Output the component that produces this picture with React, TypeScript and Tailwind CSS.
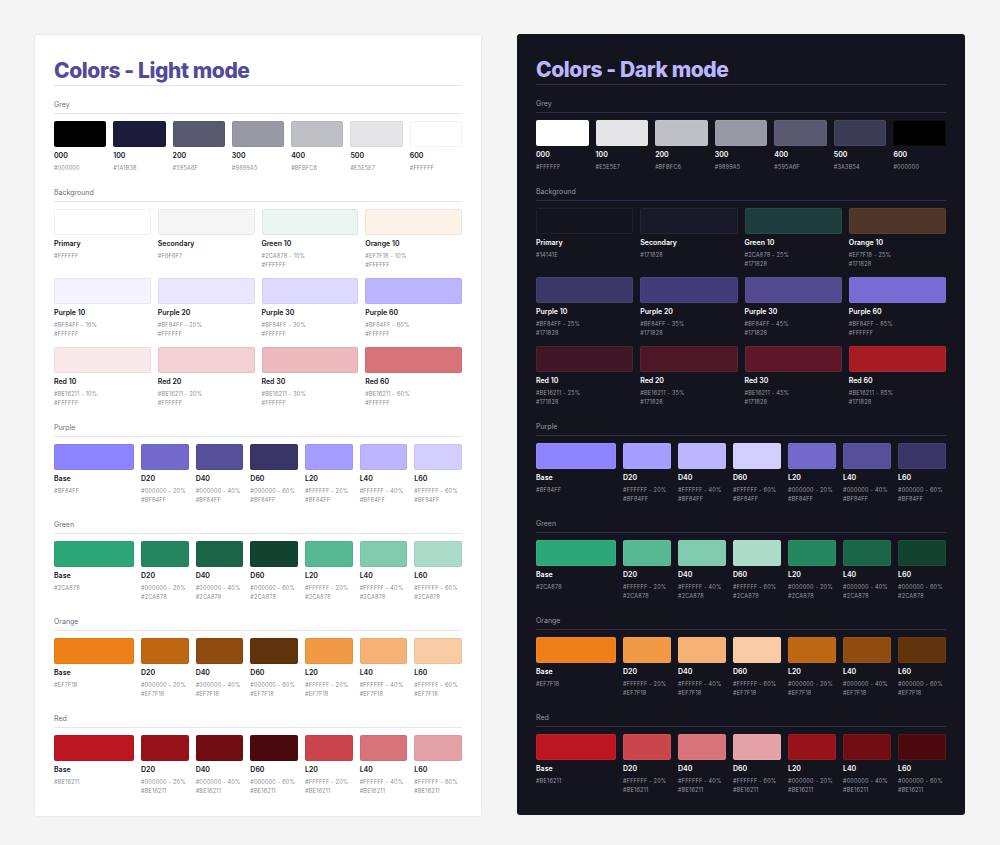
import React from "react";

type Sw = { n: string; c: string; h: string[] };
type Theme = "light" | "dark";

const greyL: Sw[] = [
  ["000", "#000000"], ["100", "#1A1B38"], ["200", "#595A6F"], ["300", "#9899A5"], ["400", "#BFBFC6"], ["500", "#E5E5E7"], ["600", "#FFFFFF"],
].map(([n, c]) => ({ n, c, h: [c] }));
const greyD: Sw[] = [
  ["000", "#FFFFFF"], ["100", "#E5E5E7"], ["200", "#BFBFC6"], ["300", "#9899A5"], ["400", "#595A6F"], ["500", "#3A3B54"], ["600", "#000000"],
].map(([n, c]) => ({ n, c, h: [c] }));

const bgL: Sw[][] = [
  [
    { n: "Primary", c: "#FFFFFF", h: ["#FFFFFF"] },
    { n: "Secondary", c: "#F6F6F7", h: ["#F6F6F7"] },
    { n: "Green 10", c: "#EAF6F1", h: ["#2CA878 - 10%", "#FFFFFF"] },
    { n: "Orange 10", c: "#FDF2E8", h: ["#EF7F18 - 10%", "#FFFFFF"] },
  ],
  [
    { n: "Purple 10", c: "#F4F3FF", h: ["#BF84FF - 10%", "#FFFFFF"] },
    { n: "Purple 20", c: "#E9E6FF", h: ["#BF84FF - 20%", "#FFFFFF"] },
    { n: "Purple 30", c: "#DEDAFF", h: ["#BF84FF - 30%", "#FFFFFF"] },
    { n: "Purple 60", c: "#BCB5FF", h: ["#BF84FF - 60%", "#FFFFFF"] },
  ],
  [
    { n: "Red 10", c: "#F9E8E9", h: ["#BE16211 - 10%", "#FFFFFF"] },
    { n: "Red 20", c: "#F2D0D3", h: ["#BE16211 - 20%", "#FFFFFF"] },
    { n: "Red 30", c: "#ECB9BC", h: ["#BE16211 - 30%", "#FFFFFF"] },
    { n: "Red 60", c: "#D8737A", h: ["#BE16211 - 60%", "#FFFFFF"] },
  ],
];
const bgD: Sw[][] = [
  [
    { n: "Primary", c: "#14141E", h: ["#14141E"] },
    { n: "Secondary", c: "#171828", h: ["#171828"] },
    { n: "Green 10", c: "#1E3D3E", h: ["#2CA878 - 25%", "#171828"] },
    { n: "Orange 10", c: "#4F3428", h: ["#EF7F18 - 25%", "#171828"] },
  ],
  [
    { n: "Purple 10", c: "#3A3869", h: ["#BF84FF - 25%", "#171828"] },
    { n: "Purple 20", c: "#403C7A", h: ["#BF84FF - 35%", "#171828"] },
    { n: "Purple 30", c: "#52498F", h: ["#BF84FF - 45%", "#171828"] },
    { n: "Purple 60", c: "#776BD6", h: ["#BF84FF - 85%", "#FFFFFF"] },
  ],
  [
    { n: "Red 10", c: "#3F1727", h: ["#BE16211 - 25%", "#171828"] },
    { n: "Red 20", c: "#4D1728", h: ["#BE16211 - 35%", "#171828"] },
    { n: "Red 30", c: "#5E1729", h: ["#BE16211 - 45%", "#171828"] },
    { n: "Red 60", c: "#A81A24", h: ["#BE16211 - 85%", "#171828"] },
  ],
];

const families: { name: string; hex: string; base: string; d: string[]; l: string[] }[] = [
  { name: "Purple", hex: "#BF84FF", base: "#8F84FF", d: ["#7369CC", "#564F99", "#393566"], l: ["#A59DFF", "#BCB5FF", "#D2CEFF"] },
  { name: "Green", hex: "#2CA878", base: "#2CA878", d: ["#23865F", "#1A6548", "#124330"], l: ["#56B993", "#80CBAE", "#ABDCC9"] },
  { name: "Orange", hex: "#EF7F18", base: "#EF7F18", d: ["#BF6613", "#8F4C0E", "#60330A"], l: ["#F29946", "#F5B274", "#F9CCA3"] },
  { name: "Red", hex: "#BE16211", base: "#BE1621", d: ["#98121A", "#720D14", "#4C090D"], l: ["#CB454D", "#D8737A", "#E5A2A6"] },
];

function famRow(f: (typeof families)[0], theme: Theme): Sw[] {
  const pct = ["20", "40", "60"];
  const first = theme === "light" ? f.d : f.l;
  const second = theme === "light" ? f.l : f.d;
  const fm = theme === "light" ? "#000000" : "#FFFFFF";
  const sm = theme === "light" ? "#FFFFFF" : "#000000";
  return [
    { n: "Base", c: f.base, h: [f.hex] },
    ...first.map((c, i) => ({ n: "D" + pct[i], c, h: [`${fm} - ${pct[i]}%`, f.hex] })),
    ...second.map((c, i) => ({ n: "L" + pct[i], c, h: [`${sm} - ${pct[i]}%`, f.hex] })),
  ];
}

function Label({ t, theme, first }: { t: string; theme: Theme; first?: boolean }) {
  return (
    <div
      className={`${first ? "mt-[14px]" : "mt-[15px]"} pb-[3px] border-b text-[7px] leading-[10px] ${
        theme === "light" ? "border-[#e6e6ea] text-[#6b6c7e]" : "border-[#2e2c4a] text-[#9899a5]"
      }`}
    >
      {t}
    </div>
  );
}

function Cell({ s, theme, lines }: { s: Sw; theme: Theme; lines: number }) {
  return (
    <div className="flex flex-col min-w-0">
      <div
        className={`h-[26px] rounded-[2px] border ${theme === "light" ? "border-black/5" : "border-white/5"}`}
        style={{ background: s.c }}
      />
      <div className={`mt-[4px] text-[7px] leading-[10px] font-semibold ${theme === "light" ? "text-[#14141e]" : "text-white"}`}>{s.n}</div>
      <div className={`mt-[3px] text-[5.5px] leading-[9px] tracking-[0.2px] whitespace-nowrap ${theme === "light" ? "text-[#8a8b99]" : "text-[#9899a5]"}`}
        style={{ minHeight: lines * 9 }}>
        {s.h.map((x) => (
          <div key={x}>{x}</div>
        ))}
      </div>
    </div>
  );
}

function Panel({ theme }: { theme: Theme }) {
  const grey = theme === "light" ? greyL : greyD;
  const bg = theme === "light" ? bgL : bgD;
  return (
    <div
      className={`w-[448px] rounded-[3px] px-[19px] pt-[22px] pb-[20px] ${
        theme === "light" ? "bg-white border border-[#ececee]" : "bg-[#14141e]"
      }`}
    >
      <div
        className={`h-[29px] text-[21px] leading-[28px] font-extrabold tracking-[-0.4px] border-b ${
          theme === "light" ? "text-[#524a9c] border-[#e6e6ea]" : "text-[#bcb5ff] border-[#2e2c4a]"
        }`}
      >
        {theme === "light" ? "Colors - Light mode" : "Colors - Dark mode"}
      </div>
      <Label t="Grey" theme={theme} first />
      <div className="mt-[7px] grid grid-cols-7 gap-[7px]">
        {grey.map((s) => <Cell key={s.n} s={s} theme={theme} lines={1} />)}
      </div>
      <Label t="Background" theme={theme} />
      <div className="mt-[7px] flex flex-col gap-[8px]">
        {bg.map((row, i) => (
          <div key={i} className="grid grid-cols-4 gap-[7px]">
            {row.map((s) => <Cell key={s.n} s={s} theme={theme} lines={2} />)}
          </div>
        ))}
      </div>
      {families.map((f) => (
        <div key={f.name}>
          <Label t={f.name} theme={theme} />
          <div className="mt-[7px] grid grid-cols-[80px_repeat(6,1fr)] gap-[7px]">
            {famRow(f, theme).map((s) => <Cell key={s.n} s={s} theme={theme} lines={2} />)}
          </div>
        </div>
      ))}
    </div>
  );
}

export default function App() {
  return (
    <div className="min-h-[845px] w-[1000px] bg-[#f4f4f4] flex items-start gap-[35px] pl-[34px] pt-[34px]" style={{ fontFamily: "Inter, 'Noto Sans', sans-serif" }}>
      <Panel theme="light" />
      <Panel theme="dark" />
    </div>
  );
}
